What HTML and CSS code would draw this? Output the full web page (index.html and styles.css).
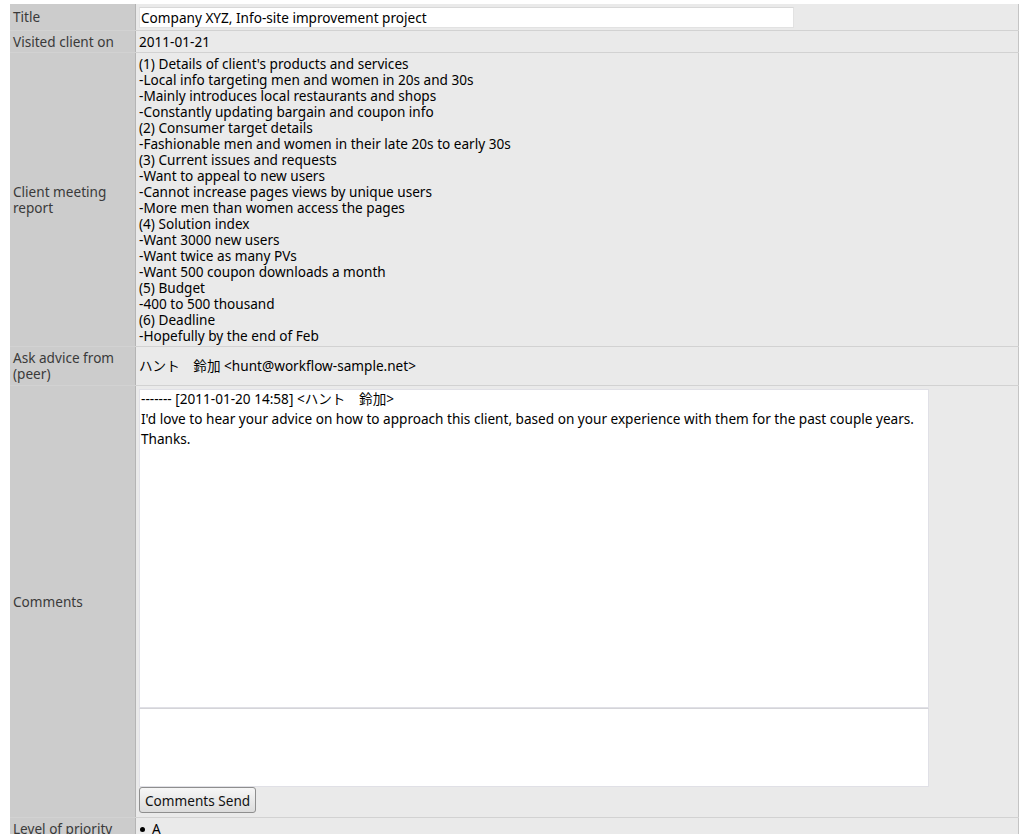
FILE: index.html
```html
<!DOCTYPE html>
<html>
<head>
<meta charset="utf-8">
<link rel="stylesheet" href="styles.css">
</head>
<body>
<table class="form">
  <tr class="row-title">
    <th>Title</th>
    <td><div class="input">Company XYZ, Info-site improvement project</div></td>
  </tr>
  <tr class="row-date">
    <th>Visited client on</th>
    <td>2011-01-21</td>
  </tr>
  <tr class="row-report">
    <th>Client meeting report</th>
    <td><div class="report">(1) Details of client's products and services<br>-Local info targeting men and women in 20s and 30s<br>-Mainly introduces local restaurants and shops<br>-Constantly updating bargain and coupon info<br>(2) Consumer target details<br>-Fashionable men and women in their late 20s to early 30s<br>(3) Current issues and requests<br>-Want to appeal to new users<br>-Cannot increase pages views by unique users<br>-More men than women access the pages<br>(4) Solution index<br>-Want 3000 new users<br>-Want twice as many PVs<br>-Want 500 coupon downloads a month<br>(5) Budget<br>-400 to 500 thousand<br>(6) Deadline<br>-Hopefully by the end of Feb</div></td>
  </tr>
  <tr class="row-peer">
    <th>Ask advice from (peer)</th>
    <td>ハント　鈴加 &lt;hunt@workflow-sample.net&gt;</td>
  </tr>
  <tr class="row-comments">
    <th>Comments</th>
    <td>
      <div class="log"><div class="log-text">------- [2011-01-20 14:58] &lt;ハント　鈴加&gt;<br>I'd love to hear your advice on how to approach this client, based on your experience with them for the past couple years.<br>Thanks.</div></div>
      <div class="newcomment"></div>
      <button class="send">Comments Send</button>
    </td>
  </tr>
  <tr class="row-priority">
    <th>Level of priority</th>
    <td><ul class="prio"><li>A</li></ul></td>
  </tr>
</table>
</body>
</html>
```
FILE: styles.css
```css
html, body {
  margin: 0;
  padding: 0;
  background: #ffffff;
}
body {
  padding: 4px 9px 0 10px;
  font-family: "Noto Sans", "Noto Sans CJK JP", sans-serif;
  font-size: 13.6px;
  color: #000;
  overflow: hidden;
}
.form {
  width: 1009px;
  border-collapse: collapse;
  border-right: 1px solid #c4c4c4;
}
.form th, .form td {
  padding: 0 3px;
  border-bottom: 1px solid #d2d2d2;
  line-height: 16px;
  text-align: left;
  font-weight: normal;
}
.form th {
  width: 119px;
  background: #cccccc;
  color: #3a3a3a;
  vertical-align: middle;
  border-right: 1px solid #b4b4b4;
  padding-left: 3px;
}
.form td {
  background: #eaeaea;
  vertical-align: middle;
}
.row-title th, .row-title td { height: 26px; }
.row-date th, .row-date td { height: 21px; }
.input {
  width: 651px;
  height: 19px;
  line-height: 19px;
  margin: 2px 0 2px 0;
  padding: 0 1px;
  background: #fff;
  border: 1px solid #e2e2e2;
  border-top-color: #d8d8d8;
}
.report {
  padding: 3px 0 2px;
  line-height: 16px;
}
.row-peer th, .row-peer td { height: 38px; }
.row-comments td { padding-top: 3px; padding-bottom: 4px; }
.log {
  width: 786px;
  height: 317px;
  background: #fff;
  border: 1px solid #e0e0e6;
  padding: 0 1px;
  overflow: hidden;
}
.log-text {
  margin-top: -1px;
  line-height: 20px;
}
.newcomment {
  width: 788px;
  height: 77px;
  background: #fff;
  border: 1px solid #e0e0e6;
  border-top-color: #d4d4d8;
}
.send {
  display: block;
  margin-top: 0;
  height: 26px;
  padding: 0 5px;
  font-family: "Noto Sans", sans-serif;
  font-size: 13.6px;
  color: #111;
  background: linear-gradient(#f6f6f6, #dcdcdc);
  border: 1px solid #8e8e8e;
  border-radius: 3px;
}
.prio {
  margin: 0;
  padding: 0 0 0 1px;
  list-style: none;
}
.prio li::before {
  content: "";
  display: inline-block;
  width: 5px;
  height: 5px;
  border-radius: 50%;
  background: #000;
  margin-right: 7px;
  vertical-align: 2px;
}
.row-priority th, .row-priority td { height: 18px; vertical-align: top; padding-top: 3px; }
```
